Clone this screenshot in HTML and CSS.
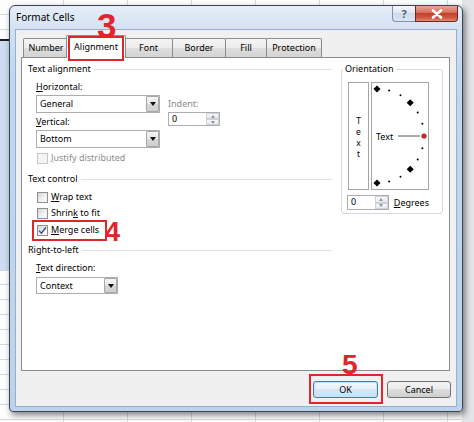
FILE: index.html
```html
<!DOCTYPE html>
<html>
<head>
<meta charset="utf-8">
<title>Format Cells</title>
<link rel="stylesheet" href="styles.css">
</head>
<body>
<div class="window">
  <div class="titlebar">
    <span class="title">Format Cells</span>
    <div class="caption-btns">
      <div class="cap help">?</div>
      <div class="cap close">
        <svg width="14" height="10" viewBox="0 0 14 10"><path d="M3 1.5 L11 8.5 M11 1.5 L3 8.5" stroke="#fff" stroke-width="2.6" stroke-linecap="round"/></svg>
      </div>
    </div>
  </div>
  <div class="client">
    <div class="tabs">
      <div class="tab t-number">Number</div>
      <div class="tab active t-align">Alignment</div>
      <div class="tab t-font">Font</div>
      <div class="tab t-border">Border</div>
      <div class="tab t-fill">Fill</div>
      <div class="tab t-prot">Protection</div>
    </div>
    <div class="pane">
      <div class="leftcol">
        <div class="grp">Text alignment</div>
        <div class="ha">
          <div class="ha-main">
            <div class="lbl"><u>H</u>orizontal:</div>
            <div class="select w-wide"><span class="val">General</span><span class="dd"></span></div>
            <div class="lbl lbl-v"><u>V</u>ertical:</div>
            <div class="select w-wide"><span class="val">Bottom</span><span class="dd"></span></div>
          </div>
          <div class="ha-indent">
            <div class="lbl muted">Indent:</div>
            <div class="spin sp-indent"><span class="val">0</span><span class="arrows"><span class="up"></span><span class="down"></span></span></div>
          </div>
        </div>
        <div class="chk disabled r-justify"><span class="box"></span><span><u>J</u>ustify distributed</span></div>
        <div class="grp g-control">Text control</div>
        <div class="chk r-wrap"><span class="box"></span><span><u>W</u>rap text</span></div>
        <div class="chk r-shrink"><span class="box"></span><span>Shrin<u>k</u> to fit</span></div>
        <div class="chk r-merge"><span class="box checked"><svg width="9" height="9" viewBox="0 0 9 9"><path d="M1 4.6 L3.4 7.2 L8 1.2" fill="none" stroke="#3b4c8c" stroke-width="1.4"/></svg></span><span><u>M</u>erge cells</span></div>
        <div class="grp g-rtl">Right-to-left</div>
        <div class="lbl indent l-dir"><u>T</u>ext direction:</div>
        <div class="select indent w-narrow"><span class="val">Context</span><span class="dd"></span></div>
      </div>
      <fieldset class="orient">
        <legend>Orientation</legend>
        <div class="orient-boxes">
          <div class="vtext"><span>T</span><span>e</span><span>x</span><span>t</span></div>
          <div class="dial">
            <svg width="56" height="106" viewBox="0 0 56 106">
              <g fill="#000">
                <rect x="2.5" y="3.5" width="5" height="5" transform="rotate(45 5 6)"/>
                <circle cx="17.2" cy="7.6" r="1"/>
                <circle cx="28.5" cy="12.3" r="1"/>
                <rect x="35.7" y="17.3" width="5" height="5" transform="rotate(45 38.2 19.8)"/>
                <circle cx="45.7" cy="29.5" r="1"/>
                <circle cx="50.4" cy="40.8" r="1"/>
                <circle cx="50.4" cy="65.2" r="1"/>
                <circle cx="45.7" cy="76.5" r="1"/>
                <rect x="35.7" y="83.7" width="5" height="5" transform="rotate(45 38.2 86.2)"/>
                <circle cx="28.5" cy="93.7" r="1"/>
                <circle cx="17.2" cy="98.4" r="1"/>
                <rect x="2.5" y="97.5" width="5" height="5" transform="rotate(45 5 100)"/>
              </g>
              <line x1="26" y1="53" x2="48" y2="53" stroke="#555" stroke-width="1"/>
              <circle cx="52" cy="53" r="2.6" fill="#c0282e"/>
              <text x="4" y="56.5" class="dial-text">Text</text>
            </svg>
          </div>
        </div>
        <div class="deg-row">
          <div class="spin sp-deg"><span class="val">0</span><span class="arrows"><span class="up"></span><span class="down"></span></span></div>
          <span class="deg-lbl"><u>D</u>egrees</span>
        </div>
      </fieldset>
    </div>
    <div class="buttons">
      <div class="btn default">OK</div>
      <div class="btn">Cancel</div>
    </div>
  </div>
</div>

<div class="mark box-align"></div>
<div class="num num3">3</div>
<div class="mark box-merge"></div>
<div class="num num4">4</div>
<div class="mark box-ok"></div>
<div class="num num5">5</div>
</body>
</html>
```

FILE: styles.css
```css
* { box-sizing: border-box; }
html, body { margin: 0; padding: 0; }
body {
  width: 474px;
  height: 422px;
  overflow: hidden;
  position: relative;
  font-family: "Noto Sans", "Liberation Sans", sans-serif;
  font-size: 9px;
  line-height: 12px;
  color: #000;
  background-color: #fdfdfd;
  background-image:
    linear-gradient(#1e1e1e, #1e1e1e),
    linear-gradient(#cddcf0, #cddcf0),
    linear-gradient(#e2e4e8, #e2e4e8),
    repeating-linear-gradient(to bottom, transparent 0 14px, #d6d9de 14px 15px),
    repeating-linear-gradient(to right, transparent 0 63px, #d6d9de 63px 64px);
  background-size: 12px 2px, 9px 230px, 12px 422px, auto, auto;
  background-position: 0 39px, 0 41px, 462px 0, 0 0, 0 0;
  background-repeat: no-repeat, no-repeat, no-repeat, repeat, repeat;
}

/* window frame */
.window {
  margin: 5px 0 0 9px;
  width: 454px;
  height: 407px;
  border: 1px solid #3a4656;
  border-radius: 6px 6px 4px 4px;
  background: linear-gradient(#e6eef8, #d2e1f2 24px, #c3d8ee 60px, #bdd3eb);
  padding: 0 5px 4px 5px;
  display: flex;
  flex-direction: column;
  box-shadow: 2px 3px 6px rgba(0, 0, 0, 0.5);
}
.titlebar {
  height: 23px;
  display: flex;
  align-items: flex-start;
  flex: none;
}
.title {
  font-size: 10px;
  margin: 5px 0 0 1px;
  color: #000;
}
.caption-btns {
  margin-left: auto;
  margin-right: -1px;
  display: flex;
}
.cap {
  height: 16px;
  display: flex;
  align-items: center;
  justify-content: center;
}
.help {
  width: 23px;
  border: 1px solid #7d93b2;
  border-top: none;
  border-right: none;
  border-radius: 0 0 0 4px;
  background: linear-gradient(#f4f7fb, #dfe7f1 50%, #cfdbea 50%, #dbe5f1);
  color: #4c5f7c;
  font-size: 11px;
  font-weight: bold;
}
.close {
  width: 43px;
  border: 1px solid #6b2a1f;
  border-top: none;
  border-radius: 0 0 4px 0;
  background: linear-gradient(#eaa898, #d66c58 45%, #c4402c 50%, #cf5a40 80%, #e0907a);
}

/* client area */
.client {
  flex: 1;
  background: #f0f0f0;
  border: 1px solid #98aecb;
  display: flex;
  flex-direction: column;
  padding: 0 6px 0 5px;
}
.tabs {
  margin-top: 8px;
  height: 19px;
  padding-left: 2px;
  display: flex;
  align-items: flex-end;
  flex: none;
}
.tab {
  height: 19px;
  border: 1px solid #898c95;
  border-bottom: none;
  margin-right: -1px;
  background: linear-gradient(#f4f4f4, #ececec 50%, #dedede 50%, #d3d3d3);
  text-align: center;
  line-height: 17px;
  border-radius: 2px 2px 0 0;
}
.tab.active {
  height: 23px;
  margin: 0 -2px -1px -2px;
  background: #fff;
  position: relative;
  z-index: 1;
  line-height: 12px;
  padding-top: 5px;
}
.t-number { width: 46px; }
.t-align { width: 60px; }
.t-font { width: 49px; }
.t-border { width: 54px; }
.t-fill { width: 42px; }
.t-prot { width: 56px; }

.pane {
  height: 314px;
  flex: none;
  border: 1px solid #898c95;
  background: #fff;
  display: flex;
  align-items: flex-start;
  padding: 5px 6px 0 6px;
}
.leftcol {
  width: 304px;
  flex: none;
}
.grp {
  display: flex;
  align-items: center;
  gap: 3px;
  height: 12px;
}
.grp::after {
  content: "";
  flex: 1;
  border-top: 1px solid #dcdfe3;
}
.g-control { margin-top: 9px; }
.g-rtl { margin-top: 8px; }
.lbl { height: 12px; }
.muted { color: #8a8a8a; }
.indent { margin-left: 8px; }

.ha {
  display: flex;
  margin-top: 6px;
  margin-left: 8px;
  gap: 8px;
}
.ha-main { width: 124px; }
.ha-main .select { margin-top: 2px; }
.lbl-v { margin-top: 3px; }
.ha-indent { padding-top: 17px; }
.ha-indent .spin { margin-top: 2px; }

.select {
  display: flex;
  align-items: stretch;
  height: 18px;
  border: 1px solid #abadb3;
  background: #fff;
  padding-left: 3px;
}
.select .val { flex: 1; display: flex; align-items: center; }
.select .dd {
  width: 13px;
  border: 1px solid #a7a7a7;
  border-radius: 1px;
  background: linear-gradient(#f5f5f5, #e6e6e6 50%, #d8d8d8 50%, #cfcfcf);
  display: flex;
  align-items: center;
  justify-content: center;
}
.select .dd::after {
  content: "";
  border-left: 3.5px solid transparent;
  border-right: 3.5px solid transparent;
  border-top: 4px solid #111;
}
.w-wide { width: 124px; }
.w-narrow { width: 82px; height: 17px; margin-top: 3px; }
.l-dir { margin-top: 6px; }

.spin {
  display: flex;
  height: 14px;
  border: 1px solid #abadb3;
  background: #fff;
}
.spin .val { flex: 1; padding-left: 3px; line-height: 12px; }
.spin .arrows {
  width: 13px;
  display: flex;
  flex-direction: column;
}
.spin .arrows span {
  flex: 1;
  border: 1px solid #cfd3d8;
  background: linear-gradient(#f7f8fa, #e6e9ee);
  display: flex;
  align-items: center;
  justify-content: center;
}
.spin .arrows .up::after {
  content: "";
  border-left: 2.5px solid transparent;
  border-right: 2.5px solid transparent;
  border-bottom: 3px solid #8a98ab;
}
.spin .arrows .down::after {
  content: "";
  border-left: 2.5px solid transparent;
  border-right: 2.5px solid transparent;
  border-top: 3px solid #8a98ab;
}
.sp-indent { width: 52px; }
.sp-deg { width: 50px; height: 15px; margin-left: -1px; }

.chk {
  display: flex;
  align-items: center;
  gap: 3px;
  height: 12px;
  margin-left: 9px;
}
.chk .box {
  width: 11px;
  height: 11px;
  border: 1px solid #8e8f8f;
  background: linear-gradient(135deg, #d6d6d6, #f6f6f6 70%, #fff);
  display: flex;
  align-items: center;
  justify-content: center;
}
.chk.disabled { color: #8d8d8d; }
.chk.disabled .box { border-color: #c6c6c6; background: #f4f4f4; }
.r-justify { margin-top: 4px; }
.r-wrap { margin-top: 6px; }
.r-shrink { margin-top: 4px; }
.r-merge { margin-top: 5px; }

/* orientation */
.orient {
  margin: 0 0 0 9px;
  width: 102px;
  border: 1px solid #d5d8dc;
  border-radius: 3px;
  padding: 7px 13px 3px 6px;
  min-width: 0;
}
.orient legend {
  padding: 0 2px;
  margin-left: -5px;
  line-height: 12px;
  font-size: 9px;
}
.orient-boxes {
  display: flex;
  gap: 2px;
  height: 108px;
}
.vtext {
  width: 21px;
  border: 1px solid #a5a5a5;
  display: flex;
  flex-direction: column;
  align-items: center;
  justify-content: center;
  font-size: 8.5px;
  line-height: 11px;
  padding-top: 2px;
}
.vtext span { display: block; height: 11px; }
.dial {
  width: 58px;
  border: 1px solid #a5a5a5;
}
.dial svg { display: block; }
.dial-text {
  font-family: "Noto Sans", "Liberation Sans", sans-serif;
  font-size: 9px;
  fill: #000;
}
.deg-row {
  display: flex;
  align-items: center;
  gap: 5px;
  margin-top: 5px;
}

/* buttons */
.buttons {
  margin-top: 10px;
  margin-right: -1px;
  display: flex;
  justify-content: flex-end;
  gap: 9px;
}
.btn {
  height: 17px;
  width: 64px;
  border: 1px solid #707070;
  border-radius: 3px;
  background: linear-gradient(#f3f3f3, #ebebeb 50%, #dddddd 50%, #cfcfcf);
  text-align: center;
  line-height: 15px;
}
.btn.default {
  width: 65px;
  border-color: #3c7fb1;
  box-shadow: inset 0 0 0 1px #c2e4f6;
  background: linear-gradient(#f2f8fc, #e6f0f8 50%, #d6e7f3 50%, #cbe0ef);
}

/* annotations (overlay) */
.mark {
  position: absolute;
  border: 2px solid #e0262b;
  z-index: 5;
}
.box-align { left: 68px; top: 36px; width: 56px; height: 25px; }
.box-merge { left: 32px; top: 220px; width: 75px; height: 21px; }
.box-ok { left: 309px; top: 374px; width: 74px; height: 30px; }
.num {
  position: absolute;
  z-index: 6;
  font-family: "Liberation Sans", Arial, sans-serif;
  font-weight: bold;
  color: #e3242b;
  line-height: 0.74;
}
.num3 { left: 97px; top: 13px; font-size: 35px; }
.num4 { left: 105px; top: 223px; font-size: 27px; }
.num5 { left: 342px; top: 355px; font-size: 28px; }
```
